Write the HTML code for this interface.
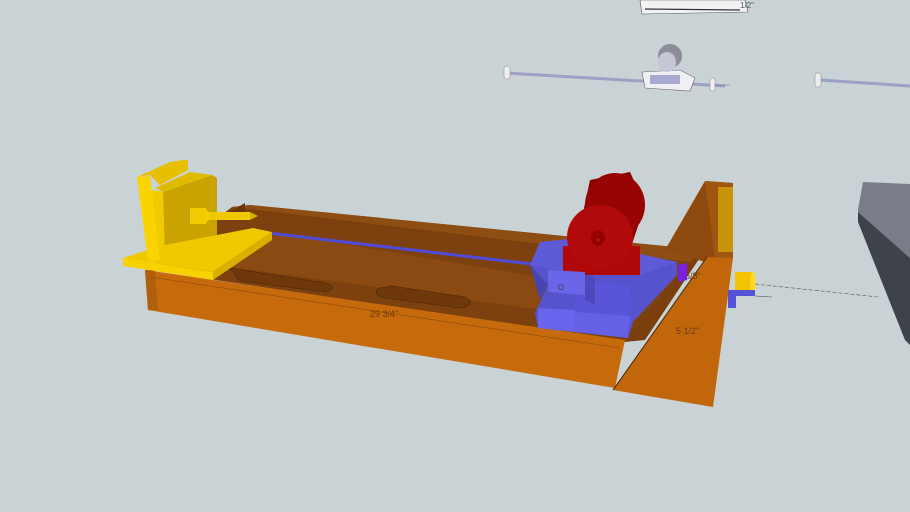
<!DOCTYPE html>
<html><head><meta charset="utf-8"><style>
html,body{margin:0;padding:0;background:#c9d3d5;}
svg{display:block;}
text{font-family:"Liberation Sans",sans-serif;}
</style></head><body>
<svg width="910" height="512" viewBox="0 0 910 512" xmlns="http://www.w3.org/2000/svg">
<rect width="910" height="512" fill="#c9d3d5"/>
<!-- top right small model -->
<polygon points="640,0 745,0 748,12 642,14" fill="#f2f2f4" stroke="#555" stroke-width="0.6"/>
<line x1="645" y1="9" x2="740" y2="10" stroke="#333" stroke-width="1.2"/>
<text x="740" y="8" font-size="8" fill="#555">1/2"</text>
<line x1="505" y1="73" x2="725" y2="86" stroke="#9d9fc6" stroke-width="3"/>
<rect x="504" y="66" width="6" height="13" rx="2" fill="#eee" stroke="#888" stroke-width="0.5"/>
<rect x="710" y="78" width="5" height="13" rx="2" fill="#eee" stroke="#888" stroke-width="0.5"/>
<line x1="715" y1="85" x2="730" y2="85" stroke="#777" stroke-width="0.5"/>
<polygon points="642,72 680,70 695,78 690,91 645,88" fill="#f0f0f4" stroke="#666" stroke-width="0.6"/>
<rect x="650" y="75" width="30" height="9" fill="#a9aad0"/>
<ellipse cx="670" cy="56" rx="12" ry="12" fill="#8c8d98"/>
<ellipse cx="667" cy="62" rx="9" ry="10" fill="#c6c7d6"/>
<line x1="820" y1="80" x2="910" y2="86" stroke="#9d9fc6" stroke-width="3"/>
<rect x="815" y="73" width="6" height="14" rx="2" fill="#eee" stroke="#888" stroke-width="0.5"/>

<!-- dark grey block right -->
<polygon points="863,182 910,184 910,258 858,212" fill="#787d88"/>
<polygon points="858,212 910,258 910,345 905,340 858,222" fill="#3e424b"/>
<polygon points="858,212 863,182 858,210" fill="#555"/>

<!-- base: top tray -->
<polygon points="150,270 232,207 250,205 705,250 645,340 625,342" fill="#7a3f0c"/>
<polygon points="232,207 250,205 705,250 690,262" fill="#8e4d12"/>
<polygon points="150,270 232,210 690,262 625,342" fill="#7c410e"/>
<polygon points="215,265 260,230 620,290 600,318" fill="#8a4a12"/>
<polygon points="228,213 245,203 245,215 232,221" fill="#6a340a"/>
<!-- slots -->
<path d="M230,268 L325,283 Q340,288 325,292 L240,281 Z" fill="#6e380b" stroke="#4a2406" stroke-width="0.6"/>
<path d="M380,288 Q370,294 385,298 L460,308 Q478,304 465,297 L392,286 Z" fill="#6e380b" stroke="#4a2406" stroke-width="0.6"/>
<!-- blue rod -->
<line x1="268" y1="233" x2="540" y2="265" stroke="#4f4bd6" stroke-width="3"/>
<!-- front face -->
<polygon points="145,270 625,340 615,388 148,310" fill="#c66a0c"/>
<polygon points="145,270 155,270 158,310 148,310" fill="#b25e0a"/>
<line x1="150" y1="277" x2="620" y2="348" stroke="#8a4a0c" stroke-width="0.6"/>
<text x="370" y="317" font-size="9" fill="#6a3a10">29 3/4"</text>

<!-- right end wall -->
<polygon points="665,250 705,181 733,183 733,258 705,262" fill="#8e4a0e"/>
<polygon points="705,181 733,183 733,258 715,258" fill="#a0560e"/>
<rect x="718" y="187" width="15" height="65" fill="#c8940c"/>
<polygon points="613,390 707,257 733,258 713,407" fill="#c2660c"/>
<line x1="613" y1="390" x2="707" y2="257" stroke="#4a2406" stroke-width="1"/>
<text x="676" y="334" font-size="9" fill="#6a3a10">5 1/2"</text>
<text x="685" y="279" font-size="9" fill="#6a3a10">5/8"</text>
<!-- right spindle -->
<rect x="735" y="272" width="18" height="20" fill="#f5c400"/>
<ellipse cx="753" cy="282" rx="3" ry="10" fill="#ffd830"/>
<rect x="728" y="290" width="27" height="6" fill="#5552d8"/>
<rect x="728" y="290" width="8" height="18" fill="#5552d8"/>
<line x1="755" y1="284" x2="878" y2="297" stroke="#555" stroke-width="0.6" stroke-dasharray="4,2"/>
<line x1="755" y1="296" x2="772" y2="297" stroke="#555" stroke-width="0.6"/>

<!-- blue carriage -->
<polygon points="530,265 540,242 570,239 677,262 677,275 633,322 628,338 538,328 535,313 548,285" fill="#5753cc"/>
<polygon points="540,242 570,239 677,262 640,275 560,270 530,265" fill="#5e5ad6"/>
<polygon points="530,265 548,285 540,300" fill="#4844b0"/>
<polygon points="678,265 687,263 687,280 678,282" fill="#7a20e0"/>
<!-- red motor -->
<rect x="563" y="246" width="77" height="29" fill="#b00808"/>
<polygon points="590,180 630,172 645,205 630,250 600,265 575,250" fill="#8c0000"/>
<ellipse cx="615" cy="205" rx="30" ry="32" fill="#980404"/>
<ellipse cx="600" cy="237" rx="33" ry="32" fill="#b20a0a"/>
<ellipse cx="598" cy="238" rx="7" ry="8" fill="#900"/>
<circle cx="598" cy="240" r="3" fill="#b20a0a" stroke="#700" stroke-width="1"/>
<!-- blue front blocks -->
<polygon points="575,293 590,282 630,286 632,322 628,338 575,330" fill="#5a55d8"/>
<polygon points="538,308 575,310 575,332 538,328" fill="#6a64ec"/>
<polygon points="575,312 630,316 628,338 575,332" fill="#6560e6"/>
<polygon points="548,270 585,272 585,295 548,292" fill="#6b66e8"/>
<polygon points="585,275 595,277 595,305 585,300" fill="#4d49bd"/>
<circle cx="561" cy="287" r="2.5" fill="none" stroke="#333" stroke-width="0.6"/>

<!-- yellow headstock -->
<polygon points="150,175 183,160 188,160 188,170 160,185" fill="#e8c000"/>
<polygon points="163,192 212,175 217,178 217,245 183,262 165,262" fill="#c9a400"/>
<polygon points="155,188 190,172 212,175 163,192" fill="#e0bb00"/>
<polygon points="152,190 163,192 165,262 156,262" fill="#f2ca00"/>
<rect x="190" y="212" width="60" height="8" fill="#f0c800"/>
<polygon points="250,212 258,216 250,220" fill="#d8b000"/>
<ellipse cx="200" cy="216" rx="10" ry="8" fill="#f5d000"/>
<rect x="190" y="208" width="16" height="16" fill="#f2cc00"/>
<polygon points="123,258 160,246 253,228 272,232 213,272" fill="#f0c800"/>
<polygon points="123,258 213,272 213,280 123,266" fill="#f7d200"/>
<polygon points="213,272 272,232 272,240 213,280" fill="#d8b000"/>
<polygon points="137,177 150,176 160,260 148,261" fill="#f9d400"/>
<polygon points="137,177 150,175 183,160 170,162" fill="#e6c000"/>
</svg>
</body></html>
